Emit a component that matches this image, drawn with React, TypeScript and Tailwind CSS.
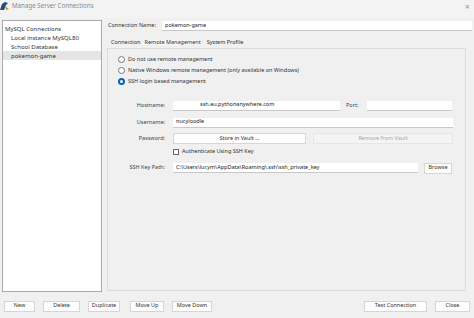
const font = { fontFamily: '"Noto Sans", "Open Sans", sans-serif' };

const Btn = ({ label, w, disabled }: { label: string; w: string; disabled?: boolean }) => (
  <div
    className={`${w} h-[11px] flex items-center justify-center border text-[5.5px] leading-none ${
      disabled
        ? "bg-[#f4f4f4] border-[#e6e6e6] text-[#a8a8a8]"
        : "bg-[#fdfdfd] border-[#d6d6d6] text-[#333]"
    }`}
  >
    {label}
  </div>
);

const Input = ({ value, w, pl = "pl-[3px]" }: { value?: string; w: string; pl?: string }) => (
  <div
    className={`${w} h-[10px] bg-white border-b border-[#c8c8c8] flex items-center ${pl} text-[5.5px] leading-none text-[#222]`}
  >
    {value}
  </div>
);

const Radio = ({ label, checked }: { label: string; checked?: boolean }) => (
  <div className="flex items-center h-[11px] gap-[3px]">
    {checked ? (
      <div className="w-[7px] h-[7px] rounded-full bg-[#0f5fb8] flex items-center justify-center">
        <div className="w-[3px] h-[3px] rounded-full bg-white" />
      </div>
    ) : (
      <div className="w-[7px] h-[7px] rounded-full border border-[#777] bg-white" />
    )}
    <span className="text-[5.5px] leading-none text-[#333]">{label}</span>
  </div>
);

const Row = ({ label, children, h = "h-[17px]" }: { label: string; children: React.ReactNode; h?: string }) => (
  <div className={`flex items-center ${h}`}>
    <div className="w-[57px] text-right text-[5.5px] leading-none text-[#444]">{label}</div>
    <div className="ml-[8px] flex items-center">{children}</div>
  </div>
);

export default function App() {
  const items = ["Local instance MySQL80", "School Database", "pokemon-game"];
  return (
    <div className="w-[474px] h-[318px] bg-[#f0f0f0] flex flex-col overflow-hidden" style={font}>
      {/* title bar */}
      <div className="h-[18px] bg-[#f3f3f3] flex items-center relative">
        <svg width="10" height="10" viewBox="0 0 10 10" className="absolute left-0 top-[1px]">
          <path d="M0 9 L2 3 L5 1 L8 2 L6 4 L4 9 Z" fill="#1f4f7a" />
          <path d="M5 5 L9 8 L6 9 Z" fill="#e08a1e" />
        </svg>
        <span className="ml-[12px] -mt-[5px] text-[6.2px] leading-none text-[#8a8a8a]">Manage Server Connections</span>
        <span className="ml-auto mr-[4px] -mt-[6px] text-[9px] leading-none text-[#999]">×</span>
      </div>

      <div className="flex-1 flex">
        {/* connections list */}
        <div className="ml-[2px] mt-[2px] w-[100px] h-[272px] bg-white border border-[#a9a9a9] pt-[3px]">
          <div className="h-[9px] pl-[2px] text-[6px] leading-none text-[#333] flex items-center">MySQL Connections</div>
          {items.map((t, i) => (
            <div
              key={t}
              className={`h-[9px] pl-[8px] text-[6px] leading-none text-[#333] flex items-center ${
                i === 2 ? "bg-[#e5e5e5]" : ""
              }`}
            >
              {t}
            </div>
          ))}
        </div>

        {/* right side */}
        <div className="ml-[3px] flex-1 flex flex-col">
          <div className="mt-[3px] flex items-center h-[10px]">
            <span className="ml-[3px] w-[54px] text-[5.5px] leading-none text-[#333]">Connection Name:</span>
            <Input value="pokemon-game" w="w-[310px]" />
          </div>

          <div className="mt-[6px] h-[11px] flex items-center gap-[3px] pl-[6px] text-[5.5px] leading-none text-[#333]">
            <span>Connection</span>
            <span className="bg-[#f7f7f7] px-[1px]">Remote Management</span>
            <span className="ml-[2px]">System Profile</span>
          </div>

          <div className="ml-[2px] w-[359px] h-[243px] border border-[#dcdcdc] bg-[#f0f0f0] pt-[5px] pl-[10px]">
            <Radio label="Do not use remote management" />
            <Radio label="Native Windows remote management (only available on Windows)" />
            <Radio label="SSH login based management" checked />

            <div className="-ml-[10px] mt-[10px]">
              <Row label="Hostname:">
                <Input value="ssh.eu.pythonanywhere.com" w="w-[167px]" pl="pl-[27px]" />
                <span className="ml-[6px] w-[21px] text-[5.5px] leading-none text-[#444]">Port:</span>
                <Input w="w-[85px]" />
              </Row>
              <Row label="Username:">
                <Input value="nucyloodle" w="w-[280px]" />
              </Row>
              <Row label="Password:" h="h-[15px]">
                <Btn label="Store in Vault ..." w="w-[133px]" />
                <div className="ml-[7px]">
                  <Btn label="Remove from Vault" w="w-[140px]" disabled />
                </div>
              </Row>
              <div className="flex items-center h-[12px] pl-[65px] gap-[3px]">
                <div className="w-[6px] h-[6px] border border-[#666] bg-white" />
                <span className="text-[5.5px] leading-none text-[#333]">Authenticate Using SSH Key</span>
              </div>
              <div className="mt-[4px]">
                <Row label="SSH Key Path:" h="h-[12px]">
                  <Input value="C:\Users\lucym\AppData\Roaming\.ssh\ssh_private_key" w="w-[245px]" />
                  <div className="ml-[6px]">
                    <Btn label="Browse" w="w-[28px]" />
                  </div>
                </Row>
              </div>
            </div>
          </div>
        </div>
      </div>

      {/* bottom buttons */}
      <div className="h-[24px] flex items-center pl-[4px] pr-[4px]">
        <div className="flex items-center gap-[8px]">
          <Btn label="New" w="w-[31px]" />
          <Btn label="Delete" w="w-[37px]" />
          <Btn label="Duplicate" w="w-[32px]" />
          <div className="ml-[2px]">
            <Btn label="Move Up" w="w-[34px]" />
          </div>
          <Btn label="Move Down" w="w-[40px]" />
        </div>
        <div className="ml-auto flex items-center gap-[8px]">
          <Btn label="Test Connection" w="w-[63px]" />
          <Btn label="Close" w="w-[35px]" />
        </div>
      </div>
    </div>
  );
}
